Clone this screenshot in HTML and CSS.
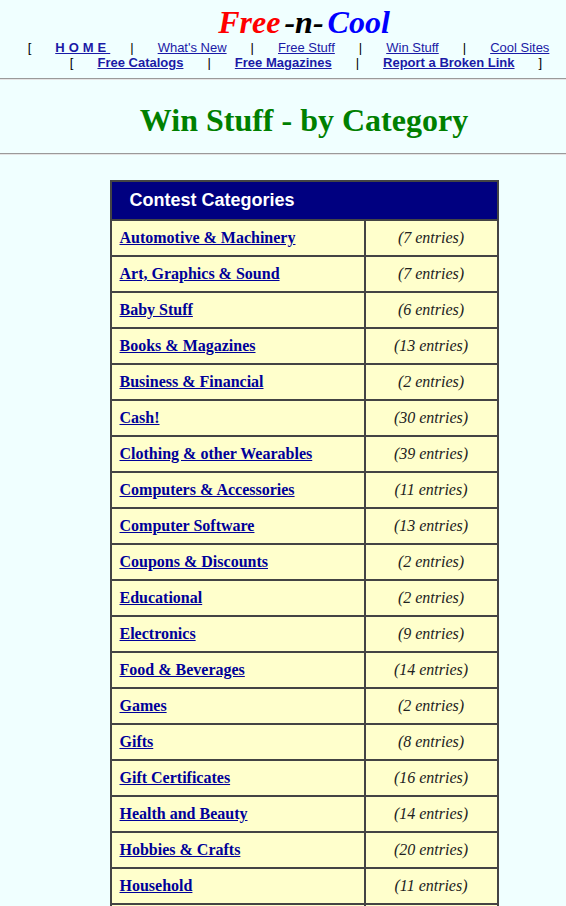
FILE: index.html
```html
<!DOCTYPE html>
<html lang="en">
<head>
    <meta charset="UTF-8">
    <title>Free-n-Cool - Win Stuff by Category</title>
    <link rel="stylesheet" href="styles.css">
</head>
<body>
    <div class="masthead">
        <div class="logo">
            <span class="logo-free">Free</span><span class="logo-n">-n-</span><span class="logo-cool">Cool</span>
        </div>
    </div>
    <div class="nav nav-top">
        <span>[</span>
        <a href="#" class="home">HOME</a>
        <span>|</span>
        <a href="#">What's New</a>
        <span>|</span>
        <a href="#">Free Stuff</a>
        <span>|</span>
        <a href="#">Win Stuff</a>
        <span>|</span>
        <a href="#">Cool Sites</a>
    </div>
    <div class="nav nav-bottom">
        <span>[</span>
        <a href="#">Free Catalogs</a>
        <span>|</span>
        <a href="#">Free Magazines</a>
        <span>|</span>
        <a href="#">Report a Broken Link</a>
        <span>]</span>
    </div>

    <hr>

    <h1 class="page-title">Win Stuff - by Category</h1>

    <hr>

    <div class="listing">
        <table class="categories">
            <tr>
                <th colspan="2">Contest Categories</th>
            </tr>
            <tr><td class="cat"><a href="#">Automotive &amp; Machinery</a></td><td class="count">(7 entries)</td></tr>
            <tr><td class="cat"><a href="#">Art, Graphics &amp; Sound</a></td><td class="count">(7 entries)</td></tr>
            <tr><td class="cat"><a href="#">Baby Stuff</a></td><td class="count">(6 entries)</td></tr>
            <tr><td class="cat"><a href="#">Books &amp; Magazines</a></td><td class="count">(13 entries)</td></tr>
            <tr><td class="cat"><a href="#">Business &amp; Financial</a></td><td class="count">(2 entries)</td></tr>
            <tr><td class="cat"><a href="#">Cash!</a></td><td class="count">(30 entries)</td></tr>
            <tr><td class="cat"><a href="#">Clothing &amp; other Wearables</a></td><td class="count">(39 entries)</td></tr>
            <tr><td class="cat"><a href="#">Computers &amp; Accessories</a></td><td class="count">(11 entries)</td></tr>
            <tr><td class="cat"><a href="#">Computer Software</a></td><td class="count">(13 entries)</td></tr>
            <tr><td class="cat"><a href="#">Coupons &amp; Discounts</a></td><td class="count">(2 entries)</td></tr>
            <tr><td class="cat"><a href="#">Educational</a></td><td class="count">(2 entries)</td></tr>
            <tr><td class="cat"><a href="#">Electronics</a></td><td class="count">(9 entries)</td></tr>
            <tr><td class="cat"><a href="#">Food &amp; Beverages</a></td><td class="count">(14 entries)</td></tr>
            <tr><td class="cat"><a href="#">Games</a></td><td class="count">(2 entries)</td></tr>
            <tr><td class="cat"><a href="#">Gifts</a></td><td class="count">(8 entries)</td></tr>
            <tr><td class="cat"><a href="#">Gift Certificates</a></td><td class="count">(16 entries)</td></tr>
            <tr><td class="cat"><a href="#">Health and Beauty</a></td><td class="count">(14 entries)</td></tr>
            <tr><td class="cat"><a href="#">Hobbies &amp; Crafts</a></td><td class="count">(20 entries)</td></tr>
            <tr><td class="cat"><a href="#">Household</a></td><td class="count">(11 entries)</td></tr>
            <tr><td class="cat"><a href="#">Jewelry &amp; Watches</a></td><td class="count">(5 entries)</td></tr>
        </table>
    </div>
</body>
</html>
```

FILE: styles.css
```css
body {
    margin: 0;
    background-color: #f0ffff;
    font-family: "Liberation Serif", "Times New Roman", serif;
    color: #000000;
}

.masthead {
    text-align: center;
    padding: 4px 0 0 42px;
}

.logo {
    font-size: 32px;
    font-weight: bold;
    font-style: italic;
    line-height: 36px;
}

.logo-free {
    color: #ff0000;
}

.logo-n {
    color: #000000;
    margin: 0 4px;
}

.logo-cool {
    color: #0000ff;
}

.nav {
    display: flex;
    justify-content: center;
    gap: 24px;
    font-family: "Liberation Sans", Arial, sans-serif;
    font-size: 13px;
    line-height: 15px;
}

.nav a {
    color: #1a1aa6;
}

.nav-top {
    padding-left: 11px;
}

.nav-top .home {
    font-weight: bold;
    letter-spacing: 4px;
    margin-right: -4px;
}

.nav-bottom {
    padding-left: 46px;
}

.nav-bottom a {
    font-weight: bold;
}

hr {
    margin: 8px 0 0;
    border: none;
    border-top: 1px solid #9a9a9a;
    border-bottom: 1px solid #e4e4e4;
}

.page-title {
    margin: 0;
    padding: 22px 0 15px 42px;
    text-align: center;
    color: #008000;
    font-size: 32px;
    line-height: 36px;
}

.page-title + hr {
    margin-top: 0;
}

.listing {
    padding: 25px 0 0 42px;
    display: flex;
    justify-content: center;
}

.categories {
    width: 389px;
    border-collapse: collapse;
    background-color: #ffffcc;
    border: 2px solid #444444;
}

.categories th {
    height: 37px;
    padding: 0 0 0 18px;
    background-color: #000080;
    color: #ffffff;
    font-family: "Liberation Sans", Arial, sans-serif;
    font-size: 18px;
    text-align: left;
    border: 2px solid #444444;
}

.categories td {
    height: 34px;
    padding: 0 8px;
    border: 2px solid #444444;
    font-size: 16px;
}

.categories .cat {
    width: 236px;
}

.categories .cat a {
    color: #000099;
    font-weight: bold;
}

.categories .count {
    text-align: center;
    font-style: italic;
    color: #222222;
}
```
